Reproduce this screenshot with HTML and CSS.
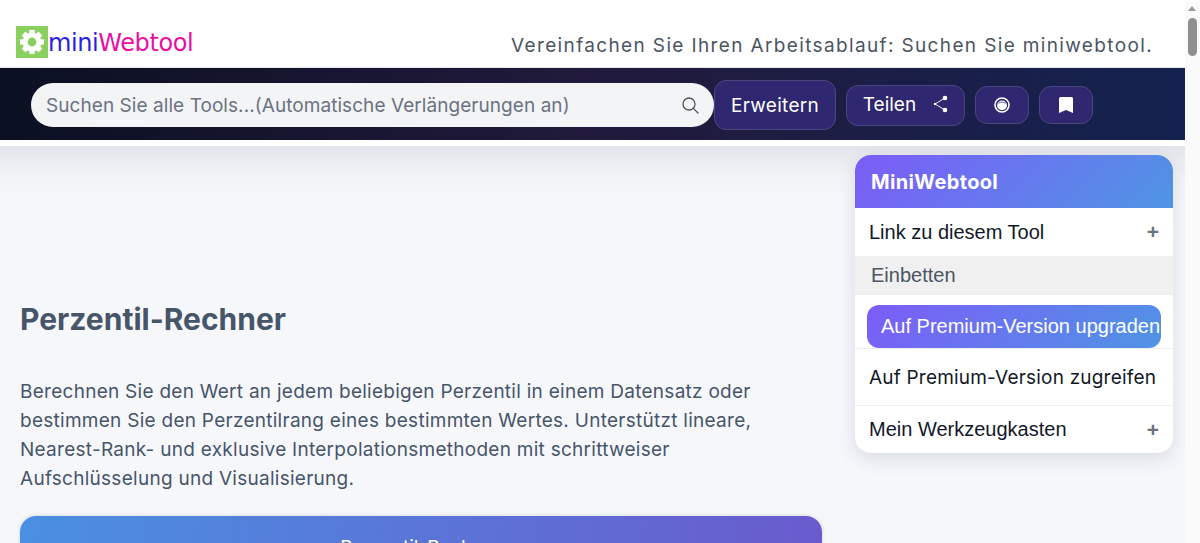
FILE: index.html
```html
<!DOCTYPE html>
<html lang="de">
<head>
<meta charset="utf-8">
<title>Perzentil-Rechner</title>
<link rel="stylesheet" href="styles.css">
</head>
<body>
<div class="page">
  <header class="top">
    <a class="logo">
      <span class="logo-box">
        <svg viewBox="0 0 32 32" width="32" height="32"><rect width="32" height="32" fill="#8ad05f"/><g fill="#fff"><circle cx="16" cy="16" r="9.4"/><rect x="13.2" y="4" width="5.6" height="24" rx="1"/><rect x="13.2" y="4" width="5.6" height="24" rx="1" transform="rotate(45 16 16)"/><rect x="13.2" y="4" width="5.6" height="24" rx="1" transform="rotate(90 16 16)"/><rect x="13.2" y="4" width="5.6" height="24" rx="1" transform="rotate(135 16 16)"/></g><circle cx="16" cy="16" r="4.4" fill="#8ad05f"/></svg>
      </span>
      <span class="logo-text"><span class="blue">mini</span><span class="pink">Webtool</span></span>
    </a>
    <p class="tagline">Vereinfachen Sie Ihren Arbeitsablauf: Suchen Sie miniwebtool.</p>
  </header>
  <nav class="bar">
    <div class="search">
      <span class="search-text">Suchen Sie alle Tools...(Automatische Verlängerungen an)</span>
      <svg class="search-icon" viewBox="0 0 18 18" width="18" height="18" fill="none" stroke="#4b5563" stroke-width="1.3"><circle cx="8" cy="8" r="6"/><path d="M12.4 12.4 17 17" stroke-linecap="round"/></svg>
    </div>
    <button class="btn btn-expand">Erweitern</button>
    <button class="btn btn-share">Teilen
      <svg viewBox="0 0 16 18" width="16" height="18" fill="none" stroke="#fff" stroke-width="0.9"><path d="M13 3 3 9l10 6"/><g fill="#fff" stroke="none"><circle cx="13" cy="3" r="2.3"/><circle cx="3" cy="9" r="1.2"/><circle cx="13" cy="15" r="2.3"/></g></svg>
    </button>
    <button class="btn btn-icon">
      <svg viewBox="0 0 16 16" width="16" height="16"><circle cx="8" cy="8" r="7" fill="none" stroke="#fff" stroke-width="1.6"/><circle cx="8" cy="8.4" r="4.9" fill="#fff"/><path d="M4.4 6.2Q8 3.6 11.6 6.2" fill="none" stroke="#2f2870" stroke-width="0.7"/></svg>
    </button>
    <button class="btn btn-icon">
      <svg viewBox="0 0 14 16" width="14" height="16"><path d="M0 1.5Q0 0 1.5 0h11Q14 0 14 1.5V16l-7-3-7 3z" fill="#fff"/></svg>
    </button>
  </nav>
  <div class="content">
    <main class="main">
      <h1 class="title">Perzentil-Rechner</h1>
      <p class="lead">Berechnen Sie den Wert an jedem beliebigen Perzentil in einem Datensatz oder bestimmen Sie den Perzentilrang eines bestimmten Wertes. Unterstützt lineare, Nearest-Rank- und exklusive Interpolationsmethoden mit schrittweiser Aufschlüsselung und Visualisierung.</p>
      <section class="card">
        <div class="card-head">Perzentil-Rechner</div>
      </section>
    </main>
    <aside class="side">
      <div class="side-head">MiniWebtool</div>
      <div class="row row-a">Link zu diesem Tool<span class="plus">+</span></div>
      <div class="row-embed">Einbetten</div>
      <div class="row-up"><span class="up-btn">Auf Premium-Version upgraden</span></div>
      <div class="row-b">Auf Premium-Version zugreifen</div>
      <div class="row row-c">Mein Werkzeugkasten<span class="plus">+</span></div>
    </aside>
  </div>
</div>
<div class="scroll">
  <span class="arrow"></span>
  <span class="thumb"></span>
</div>
</body>
</html>
```
FILE: styles.css
```css
* { box-sizing: border-box; }
html, body { margin: 0; height: 543px; overflow: hidden; }
body { display: flex; width: 1200px; background: #fff; font-family: "Inter", "Liberation Sans", sans-serif; }
.page { width: 1185px; height: 543px; overflow: hidden; display: flex; flex-direction: column; }
.top { height: 68px; flex: none; display: flex; justify-content: space-between; padding: 26px 32px 0 16px; border-bottom: 1px solid #e5e7eb; }
.logo { display: flex; height: 32px; }
.logo-box { width: 32px; height: 32px; display: block; }
.logo-box svg { display: block; }
.logo-text { font-family: "DejaVu Sans", sans-serif; font-size: 24px; line-height: 34px; letter-spacing: -0.4px; }
.blue { color: #2a1fe0; }
.pink { color: #e80fa5; }
.tagline { margin: 8px 0 0; font-size: 19px; line-height: 24px; color: #4b5563; letter-spacing: 1.36px; white-space: nowrap; }
.bar { height: 72px; flex: none; display: flex; align-items: center; padding: 2px 0 0 31px; background: linear-gradient(90deg, #0b1022 0%, #211a3c 50%, #14224f 100%); }
.search { width: 683px; height: 44px; border-radius: 22px; background: #f3f4f6; display: flex; align-items: center; justify-content: space-between; padding: 0 15px; }
.search-text { font-size: 19px; color: #6b7280; white-space: nowrap; letter-spacing: 0.06px; }
.search-icon { display: block; }
.btn { display: flex; align-items: center; justify-content: center; color: #fff; font-family: inherit; background: #2f2870; border: 1px solid #4c4680; padding: 0; }
.btn-expand { width: 122px; height: 50px; border-radius: 12px; font-size: 19px; letter-spacing: 0.3px; }
.btn-share { width: 119px; height: 41px; border-radius: 12px; font-size: 19px; margin-left: 10px; gap: 16px; padding-bottom: 2px; }
.btn-icon { width: 54px; height: 38px; border-radius: 12px; margin-left: 10px; }
.content { flex: 1; margin-top: 6px; min-height: 0; display: flex; align-items: flex-start; background: linear-gradient(180deg, #e3e4e9 0, #ebecf1 16px, #f3f4f8 32px, #f6f7fb 50px); }
.main { width: 802px; margin-left: 20px; padding-top: 154px; }
.title { margin: 0; font-size: 30px; line-height: 38px; font-weight: 700; color: #475569; }
.lead { margin: 39px 0 0; font-size: 19px; line-height: 29px; color: #475569; letter-spacing: 0.27px; }
.card { margin-top: 23px; height: 100px; border-radius: 16px 16px 0 0; background: linear-gradient(100deg, #4a90e2, #6a5acd); box-shadow: 0 0 4px rgba(0,0,0,.15); }
.card-head { text-align: center; color: #fff; font-size: 19px; font-weight: 400; padding-top: 20px; }
.side { width: 318px; margin: 9px 0 0 33px; background: #fff; border-radius: 16px; overflow: hidden; box-shadow: 0 6px 20px rgba(30,40,80,.13); font-family: "Liberation Sans", sans-serif; color: #111827; }
.side-head { height: 53px; padding-left: 16px; display: flex; align-items: center; background: linear-gradient(135deg, #7c5cf8, #4f95e4); color: #fff; font-family: "Inter", sans-serif; font-size: 20px; font-weight: 700; letter-spacing: 0.35px; }
.row { display: flex; justify-content: space-between; align-items: center; padding: 0 14px; font-size: 20px; }
.row-a { height: 48px; }
.plus { font-size: 21px; font-weight: 700; color: #6b7280; }
.row-embed { height: 39px; padding-left: 16px; display: flex; align-items: center; background: #f0f0f0; color: #4b5563; font-size: 20px; }
.row-up { height: 54px; padding: 10px 12px 1px; border-bottom: 1px solid #eceef1; }
.up-btn { display: flex; align-items: center; height: 43px; padding-left: 14px; border-radius: 12px; background: linear-gradient(135deg, #7c5cf8, #4f95e4); color: #fff; font-size: 20px; white-space: nowrap; overflow: hidden; }
.row-b { height: 57px; padding-left: 14px; display: flex; align-items: center; font-family: "Inter", sans-serif; font-size: 19px; letter-spacing: 0.2px; border-bottom: 1px solid #eceef1; white-space: nowrap; }
.row-c { height: 47px; }
.scroll { width: 15px; flex: none; height: 543px; background: #fafafa; position: relative; }
.arrow { position: absolute; left: 3px; top: 6px; width: 0; height: 0; border-left: 4.5px solid transparent; border-right: 4.5px solid transparent; border-bottom: 5px solid #9a9a9a; }
.thumb { position: absolute; left: 3px; top: 18px; width: 9px; height: 38px; border-radius: 5px; background: #8f8f8f; }
```
